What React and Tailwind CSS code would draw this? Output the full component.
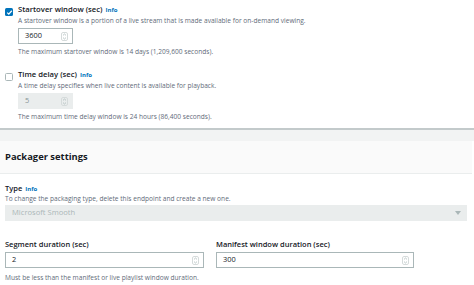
import React from 'react';

function Spinner() {
  return (
    <svg width="7" height="9" viewBox="0 0 7 9" className="shrink-0">
      <rect x="0.5" y="0.5" width="6" height="8" rx="1.5" fill="none" stroke="#d5dbdb" />
      <path d="M2 3.4 L3.5 2 L5 3.4" fill="none" stroke="#aab7b8" strokeWidth="0.8" />
      <path d="M2 5.6 L3.5 7 L5 5.6" fill="none" stroke="#aab7b8" strokeWidth="0.8" />
    </svg>
  );
}

function Info() {
  return <span className="ml-[3px] text-[6px] font-bold text-[#0073bb]">Info</span>;
}

function NumberInput({ value, disabled, className }) {
  return (
    <div
      className={`flex h-[16px] items-center justify-between border pl-[6px] pr-[4px] text-[7.4px] ${
        disabled
          ? 'border-[#eaeded] bg-[#eaeded] text-[#879596]'
          : 'border-[#aab7b8] bg-white text-[#16191f]'
      } ${className}`}
    >
      <span>{value}</span>
      <Spinner />
    </div>
  );
}

function CheckField({ checked, label, desc, value, disabled, hint }) {
  return (
    <div className="flex gap-[5px]">
      <div
        className={`mt-[4px] flex h-[8px] w-[8px] shrink-0 items-center justify-center rounded-[1.5px] ${
          checked ? 'bg-[#0073bb]' : 'border border-[#aab7b8] bg-white'
        }`}
      >
        {checked && (
          <svg width="7" height="7" viewBox="0 0 7 7">
            <path d="M1.2 3.6 L2.8 5.1 L5.8 1.8" fill="none" stroke="white" strokeWidth="1.3" />
          </svg>
        )}
      </div>
      <div className="flex flex-col">
        <div className="flex items-baseline text-[7.7px] font-semibold leading-[11px] text-[#16191f]">
          {label}
          <Info />
        </div>
        <div className="text-[6.6px] leading-[9px] text-[#5f6b7a]">{desc}</div>
        <NumberInput value={value} disabled={disabled} className="mt-[3px] w-[55px]" />
        <div className="mt-[3px] text-[6.6px] leading-[9px] text-[#5f6b7a]">{hint}</div>
      </div>
    </div>
  );
}

export default function App() {
  return (
    <div
      className="h-[285px] w-[474px] overflow-hidden bg-white"
      style={{ fontFamily: '"Open Sans", "Noto Sans", sans-serif' }}
    >
      <div className="flex flex-col gap-[13px] px-[5px] pt-[4px]">
        <CheckField
          checked
          label="Startover window (sec)"
          desc="A startover window is a portion of a live stream that is made available for on-demand viewing."
          value="3600"
          hint="The maximum startover window is 14 days (1,209,600 seconds)."
        />
        <CheckField
          label="Time delay (sec)"
          desc="A time delay specifies when live content is available for playback."
          value="5"
          disabled
          hint="The maximum time delay window is 24 hours (86,400 seconds)."
        />
      </div>

      <div className="mt-[7px] h-[2px] bg-[#c3cacb]" />
      <div className="h-[11px] bg-[#f2f3f3]" />
      <div className="mr-[2px] flex h-[33px] items-center border-b border-[#eaeded] bg-[#fafafa] px-[5px] text-[9.4px] font-bold text-[#16191f]">
        Packager settings
      </div>

      <div className="px-[5px] pt-[9px]">
        <div className="flex items-baseline text-[7.5px] font-semibold leading-[10px] text-[#16191f]">
          Type
          <Info />
        </div>
        <div className="text-[6.6px] leading-[9px] text-[#5f6b7a]">
          To change the packaging type, delete this endpoint and create a new one.
        </div>
        <div className="mt-[2px] flex h-[16px] w-[462px] items-center justify-between bg-[#eaeded] pl-[7px] pr-[6px] text-[7.6px] text-[#aab7b8]">
          <span>Microsoft Smooth</span>
          <svg width="6" height="4" viewBox="0 0 6 4">
            <path d="M0 0 H6 L3 4 Z" fill="#aab7b8" />
          </svg>
        </div>

        <div className="mt-[18px] flex gap-[12px]">
          <div className="flex w-[199px] flex-col">
            <div className="text-[7.5px] font-semibold leading-[11px] text-[#16191f]">Segment duration (sec)</div>
            <NumberInput value="2" className="mt-[2px] w-[199px]" />
            <div className="mt-[5px] whitespace-nowrap text-[6.6px] leading-[9px] text-[#5f6b7a]">
              Must be less than the manifest or live playlist window duration.
            </div>
          </div>
          <div className="flex w-[198px] flex-col">
            <div className="text-[7.5px] font-semibold leading-[11px] text-[#16191f]">
              Manifest window duration (sec)
            </div>
            <NumberInput value="300" className="mt-[2px] w-[198px]" />
          </div>
        </div>
      </div>
    </div>
  );
}
